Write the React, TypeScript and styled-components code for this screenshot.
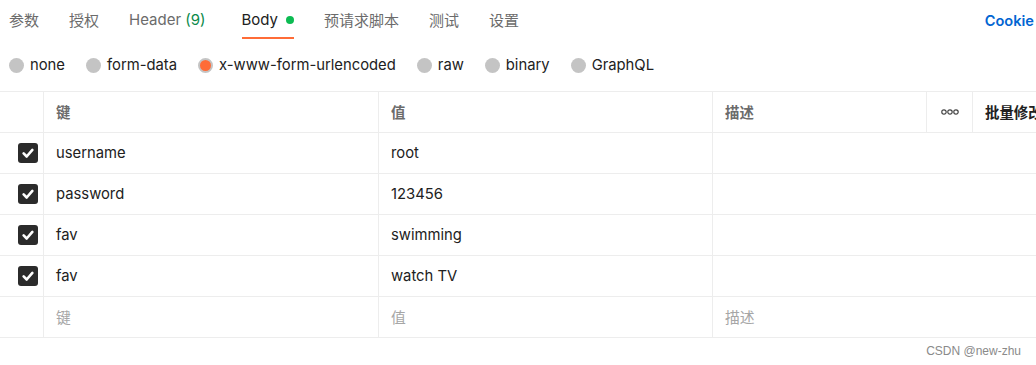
import React from 'react';
import styled, { createGlobalStyle } from 'styled-components';

const GlobalStyle = createGlobalStyle`
    body {
        margin: 0;
        background: #fff;
        font-family: Inter, "Noto Sans CJK SC", sans-serif;
        font-size: 14px;
        color: #212121;
    }
`;

const Page = styled.div`
    width: 1036px;
    height: 365px;
    overflow: hidden;
    position: relative;
`;

const TabBar = styled.div`
    display: flex;
    align-items: flex-start;
    height: 39px;
    padding: 0 9px;
    gap: 30px;
`;

const Tab = styled.div<{ $active?: boolean }>`
    display: flex;
    align-items: center;
    height: 39px;
    padding-top: 2px;
    box-sizing: border-box;
    white-space: pre;
    font-size: 15px;
    color: ${p => (p.$active ? '#212121' : '#6b6b6b')};
    border-bottom: 2px solid ${p => (p.$active ? '#ff6c37' : 'transparent')};
`;

const Count = styled.span`
    color: #0b8a4a;
    padding-right: 6px;
`;

const Dot = styled.span`
    width: 8px;
    height: 8px;
    margin-left: 8px;
    border-radius: 50%;
    background: #0cbb52;
`;

const Cookie = styled.div`
    margin-left: auto;
    height: 39px;
    padding-top: 2px;
    box-sizing: border-box;
    display: flex;
    align-items: center;
    color: #0265d2;
    font-weight: 600;
    font-size: 14.6px;
    margin-right: -7px;
`;

const RadioRow = styled.div`
    display: flex;
    align-items: center;
    height: 52px;
    padding: 0 9px;
    gap: 21px;
`;

const RadioItem = styled.label`
    display: flex;
    align-items: center;
    gap: 6px;
    color: #212121;
    font-size: 14.8px;
`;

const Radio = styled.span<{ $checked?: boolean }>`
    width: 15px;
    height: 15px;
    border-radius: 50%;
    box-sizing: border-box;
    background: ${p => (p.$checked ? '#ff6c37' : '#c4c4c4')};
    border: ${p => (p.$checked ? '2.5px solid #c4c4c4' : 'none')};
`;

const Table = styled.div`
    display: grid;
    grid-template-columns: 44px 335px 334px 214px 46px 1fr;
    border-top: 1px solid #ededed;
`;

const Cell = styled.div<{ $span?: number; $last?: boolean }>`
    height: 41px;
    box-sizing: border-box;
    border-bottom: 1px solid #ededed;
    border-right: ${p => (p.$last ? 'none' : '1px solid #ededed')};
    display: flex;
    align-items: center;
    padding: 0 12px 1px;
    grid-column: span ${p => p.$span ?? 1};
    white-space: nowrap;
    overflow: hidden;
    font-size: 14.8px;
`;

const HeadCell = styled(Cell)<{ $strong?: boolean }>`
    color: ${p => (p.$strong ? '#212121' : '#6b6b6b')};
    font-weight: 600;
    font-size: 14.4px;
`;

const CheckCell = styled(Cell)`
    justify-content: flex-end;
    padding: 0 5px 0 0;
`;

const DotsCell = styled(HeadCell)`
    justify-content: center;
    padding: 0;
`;

const Placeholder = styled.span`
    color: #a6a6a6;
`;

const Checkbox = styled.span`
    width: 20px;
    height: 20px;
    border-radius: 3px;
    background: #2b2b2b;
    display: flex;
    align-items: center;
    justify-content: center;
`;

const Watermark = styled.div`
    position: absolute;
    right: 15px;
    top: 344px;
    font-family: "Liberation Sans", Arial, sans-serif;
    font-size: 12px;
    color: #8a8a8a;
`;

const rows = [
    { key: 'username', value: 'root' },
    { key: 'password', value: '123456' },
    { key: 'fav', value: 'swimming' },
    { key: 'fav', value: 'watch TV' },
];

function Check() {
    return (
        <Checkbox>
            <svg width="14" height="14" viewBox="0 0 16 16">
                <path d="M3 8.5 L6.5 12 L13 4.5" fill="none" stroke="#fff" strokeWidth="3"
                      strokeLinecap="round" strokeLinejoin="round"/>
            </svg>
        </Checkbox>
    );
}

function MoreIcon() {
    return (
        <svg width="18" height="6" viewBox="0 0 18 6">
            <circle cx="3" cy="3" r="2.2" fill="none" stroke="#444" strokeWidth="1.2"/>
            <circle cx="9" cy="3" r="2.2" fill="none" stroke="#444" strokeWidth="1.2"/>
            <circle cx="15" cy="3" r="2.2" fill="none" stroke="#444" strokeWidth="1.2"/>
        </svg>
    );
}

export default function App() {
    return (
        <Page>
            <GlobalStyle/>
            <TabBar>
                <Tab>参数</Tab>
                <Tab>授权</Tab>
                <Tab>Header <Count>(9)</Count></Tab>
                <Tab $active>Body<Dot/></Tab>
                <Tab>预请求脚本</Tab>
                <Tab>测试</Tab>
                <Tab>设置</Tab>
                <Cookie>Cookie</Cookie>
            </TabBar>
            <RadioRow>
                <RadioItem><Radio/>none</RadioItem>
                <RadioItem><Radio/>form-data</RadioItem>
                <RadioItem><Radio $checked/>x-www-form-urlencoded</RadioItem>
                <RadioItem><Radio/>raw</RadioItem>
                <RadioItem><Radio/>binary</RadioItem>
                <RadioItem><Radio/>GraphQL</RadioItem>
            </RadioRow>
            <Table>
                <HeadCell/>
                <HeadCell>键</HeadCell>
                <HeadCell>值</HeadCell>
                <HeadCell>描述</HeadCell>
                <DotsCell><MoreIcon/></DotsCell>
                <HeadCell $strong $last>批量修改</HeadCell>
                {rows.map((r, i) => (
                    <React.Fragment key={i}>
                        <CheckCell><Check/></CheckCell>
                        <Cell>{r.key}</Cell>
                        <Cell>{r.value}</Cell>
                        <Cell $span={3} $last/>
                    </React.Fragment>
                ))}
                <Cell/>
                <Cell><Placeholder>键</Placeholder></Cell>
                <Cell><Placeholder>值</Placeholder></Cell>
                <Cell $span={3} $last><Placeholder>描述</Placeholder></Cell>
            </Table>
            <Watermark>CSDN @new-zhu</Watermark>
        </Page>
    );
}
